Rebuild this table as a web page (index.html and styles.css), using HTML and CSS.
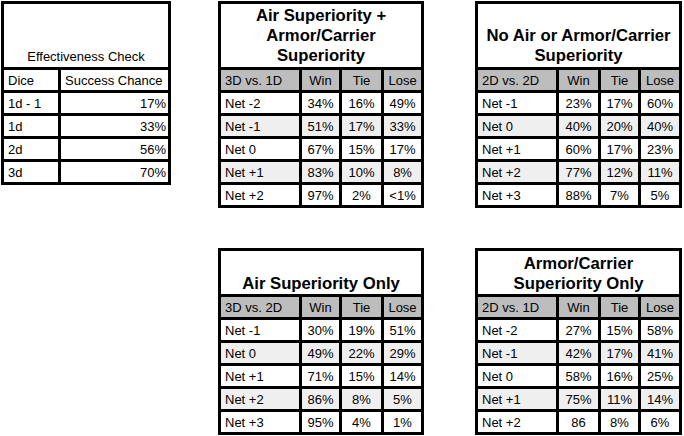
FILE: index.html
```html
<!DOCTYPE html>
<html>
<head>
<meta charset="utf-8">
<link rel="stylesheet" href="styles.css">
</head>
<body>
<div class="board">
  <table class="sheet eff">
    <colgroup><col class="c-dice"><col class="c-chance"></colgroup>
    <tr><td colspan="2" class="title-cell"><div class="title small">Effectiveness Check</div></td></tr>
    <tr><td class="l">Dice</td><td class="l">Success Chance</td></tr>
    <tr><td class="l">1d - 1</td><td class="r">17%</td></tr>
    <tr><td class="l">1d</td><td class="r">33%</td></tr>
    <tr><td class="l">2d</td><td class="r">56%</td></tr>
    <tr><td class="l">3d</td><td class="r">70%</td></tr>
  </table>

  <table class="sheet odds top mid">
    <colgroup><col class="c1"><col class="c2"><col class="c3"><col class="c4"></colgroup>
    <tr><td colspan="4" class="title-cell"><div class="title">Air Superiority + Armor/Carrier Superiority</div></td></tr>
    <tr class="head"><td class="l">3D vs. 1D</td><td>Win</td><td>Tie</td><td>Lose</td></tr>
    <tr><td class="l">Net -2</td><td>34%</td><td>16%</td><td>49%</td></tr>
    <tr class="alt"><td class="l">Net -1</td><td>51%</td><td>17%</td><td>33%</td></tr>
    <tr><td class="l">Net 0</td><td>67%</td><td>15%</td><td>17%</td></tr>
    <tr class="alt"><td class="l">Net +1</td><td>83%</td><td>10%</td><td>8%</td></tr>
    <tr><td class="l">Net +2</td><td>97%</td><td>2%</td><td>&lt;1%</td></tr>
  </table>

  <table class="sheet odds top right">
    <colgroup><col class="c1"><col class="c2"><col class="c3"><col class="c4"></colgroup>
    <tr><td colspan="4" class="title-cell"><div class="title">No Air or Armor/Carrier Superiority</div></td></tr>
    <tr class="head"><td class="l">2D vs. 2D</td><td>Win</td><td>Tie</td><td>Lose</td></tr>
    <tr><td class="l">Net -1</td><td>23%</td><td>17%</td><td>60%</td></tr>
    <tr class="alt"><td class="l">Net 0</td><td>40%</td><td>20%</td><td>40%</td></tr>
    <tr><td class="l">Net +1</td><td>60%</td><td>17%</td><td>23%</td></tr>
    <tr class="alt"><td class="l">Net +2</td><td>77%</td><td>12%</td><td>11%</td></tr>
    <tr><td class="l">Net +3</td><td>88%</td><td>7%</td><td>5%</td></tr>
  </table>

  <table class="sheet odds bottom mid">
    <colgroup><col class="c1"><col class="c2"><col class="c3"><col class="c4"></colgroup>
    <tr><td colspan="4" class="title-cell"><div class="title">Air Superiority Only</div></td></tr>
    <tr class="head"><td class="l">3D vs. 2D</td><td>Win</td><td>Tie</td><td>Lose</td></tr>
    <tr><td class="l">Net -1</td><td>30%</td><td>19%</td><td>51%</td></tr>
    <tr class="alt"><td class="l">Net 0</td><td>49%</td><td>22%</td><td>29%</td></tr>
    <tr><td class="l">Net +1</td><td>71%</td><td>15%</td><td>14%</td></tr>
    <tr class="alt"><td class="l">Net +2</td><td>86%</td><td>8%</td><td>5%</td></tr>
    <tr><td class="l">Net +3</td><td>95%</td><td>4%</td><td>1%</td></tr>
  </table>

  <table class="sheet odds bottom right">
    <colgroup><col class="c1"><col class="c2"><col class="c3"><col class="c4"></colgroup>
    <tr><td colspan="4" class="title-cell"><div class="title">Armor/Carrier Superiority Only</div></td></tr>
    <tr class="head"><td class="l">2D vs. 1D</td><td>Win</td><td>Tie</td><td>Lose</td></tr>
    <tr><td class="l">Net -2</td><td>27%</td><td>15%</td><td>58%</td></tr>
    <tr class="alt"><td class="l">Net -1</td><td>42%</td><td>17%</td><td>41%</td></tr>
    <tr><td class="l">Net 0</td><td>58%</td><td>16%</td><td>25%</td></tr>
    <tr class="alt"><td class="l">Net +1</td><td>75%</td><td>11%</td><td>14%</td></tr>
    <tr><td class="l">Net +2</td><td>86</td><td>8%</td><td>6%</td></tr>
  </table>
</div>
</body>
</html>
```
FILE: styles.css
```css
html, body {
  margin: 0;
  padding: 0;
  background: #ffffff;
}
body {
  font-family: "Liberation Sans", Arial, sans-serif;
  font-size: 13px;
  color: #000;
}
.board {
  display: grid;
  grid-template-columns: 217px 257px 207px;
  grid-template-rows: auto auto;
  row-gap: 40px;
  padding: 1px 0 0 1px;
  align-items: start;
}
.sheet {
  border-collapse: separate;
  border-spacing: 0;
  border-top: 3px solid #000;
  border-left: 3px solid #000;
  table-layout: fixed;
  background: #fff;
}
.sheet td {
  border-right: 3px solid #000;
  border-bottom: 3px solid #000;
  padding: 2px 0 0 0;
  height: 18px;
  line-height: 18px;
  text-align: center;
  white-space: nowrap;
  overflow: hidden;
  vertical-align: top;
}
.sheet td.l { text-align: left; padding-left: 4px; }
.sheet td.r { text-align: right; padding-right: 2px; }
.sheet td.title-cell {
  padding: 0;
  height: auto;
  white-space: normal;
  vertical-align: bottom;
}
.title {
  display: flex;
  flex-direction: column;
  justify-content: flex-end;
  text-align: center;
  font-weight: bold;
  font-size: 16.7px;
  line-height: 20px;
  box-sizing: border-box;
}
.top .title { height: 63px; padding-bottom: 1px; }
.bottom .title { height: 43px; padding-bottom: 0; }
.eff .title {
  height: 63px;
  font-weight: normal;
  font-size: 13px;
  padding-bottom: 0;
}
.eff { width: 170px; }
.c-dice { width: 57px; }
.c-chance { width: 110px; }
.odds .c1 { width: 81px; }
.mid .c2 { width: 40px; }
.mid .c3 { width: 42px; }
.mid .c4 { width: 40px; }
.right .c2 { width: 42px; }
.right .c3 { width: 40px; }
.right .c4 { width: 41px; }
.mid { width: 206px; }
.right { width: 207px; }
.bottom.mid { grid-column: 2; grid-row: 2; }
.bottom.right { grid-column: 3; grid-row: 2; }
.head td { background: #bdbdbd; }
.alt td { background: #efefef; }
```
